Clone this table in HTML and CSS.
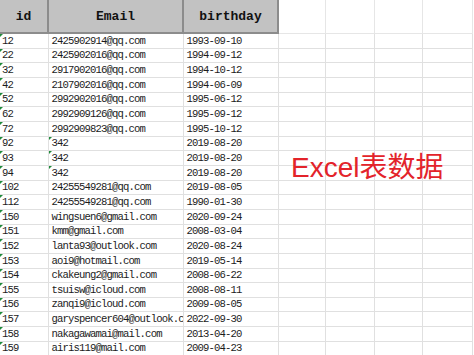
FILE: index.html
```html
<!DOCTYPE html>
<html lang="zh">
<head>
<meta charset="utf-8">
<link rel="stylesheet" href="styles.css">
</head>
<body>
<div class="sheet">
<table class="grid">
<colgroup>
<col class="c-id"><col class="c-email"><col class="c-bd"><col class="c-e1"><col class="c-e2"><col class="c-e3"><col class="c-e4">
</colgroup>
<thead>
<tr class="head"><th>id</th><th>Email</th><th>birthday</th><th class="blank"></th><th class="blank"></th><th class="blank"></th><th class="blank"></th></tr>
</thead>
<tbody>
<tr><td class="mark">12</td><td>2425902914@qq.com</td><td>1993-09-10</td><td></td><td></td><td></td><td></td></tr>
<tr><td class="mark">22</td><td>2425902016@qq.com</td><td>1994-09-12</td><td></td><td></td><td></td><td></td></tr>
<tr><td class="mark">32</td><td>2917902016@qq.com</td><td>1994-10-12</td><td></td><td></td><td></td><td></td></tr>
<tr><td class="mark">42</td><td>2107902016@qq.com</td><td>1994-06-09</td><td></td><td></td><td></td><td></td></tr>
<tr><td class="mark">52</td><td>2992902016@qq.com</td><td>1995-06-12</td><td></td><td></td><td></td><td></td></tr>
<tr><td class="mark">62</td><td>2992909126@qq.com</td><td>1995-09-12</td><td></td><td></td><td></td><td></td></tr>
<tr><td class="mark">72</td><td>2992909823@qq.com</td><td>1995-10-12</td><td></td><td></td><td></td><td></td></tr>
<tr><td class="mark">92</td><td class="mark">342</td><td>2019-08-20</td><td></td><td></td><td></td><td></td></tr>
<tr><td class="mark">93</td><td class="mark">342</td><td>2019-08-20</td><td></td><td></td><td></td><td></td></tr>
<tr><td class="mark">94</td><td class="mark">342</td><td>2019-08-20</td><td></td><td></td><td></td><td></td></tr>
<tr><td class="mark">102</td><td>24255549281@qq.com</td><td>2019-08-05</td><td></td><td></td><td></td><td></td></tr>
<tr><td class="mark">112</td><td>24255549281@qq.com</td><td>1990-01-30</td><td></td><td></td><td></td><td></td></tr>
<tr><td class="mark">150</td><td>wingsuen6@gmail.com</td><td>2020-09-24</td><td></td><td></td><td></td><td></td></tr>
<tr><td class="mark">151</td><td>kmm@gmail.com</td><td>2008-03-04</td><td></td><td></td><td></td><td></td></tr>
<tr><td class="mark">152</td><td>lanta93@outlook.com</td><td>2020-08-24</td><td></td><td></td><td></td><td></td></tr>
<tr><td class="mark">153</td><td>aoi9@hotmail.com</td><td>2019-05-14</td><td></td><td></td><td></td><td></td></tr>
<tr><td class="mark">154</td><td>ckakeung2@gmail.com</td><td>2008-06-22</td><td></td><td></td><td></td><td></td></tr>
<tr><td class="mark">155</td><td>tsuisw@icloud.com</td><td>2008-08-11</td><td></td><td></td><td></td><td></td></tr>
<tr><td class="mark">156</td><td>zanqi9@icloud.com</td><td>2009-08-05</td><td></td><td></td><td></td><td></td></tr>
<tr><td class="mark">157</td><td>garyspencer604@outlook.com</td><td>2022-09-30</td><td></td><td></td><td></td><td></td></tr>
<tr><td class="mark">158</td><td>nakagawamai@mail.com</td><td>2013-04-20</td><td></td><td></td><td></td><td></td></tr>
<tr><td class="mark">159</td><td>airis119@mail.com</td><td>2009-04-23</td><td></td><td></td><td></td><td></td></tr>
</tbody>
</table>
<div class="label">Excel表数据</div>
</div>
</body>
</html>
```
FILE: styles.css
```css
html, body {
  margin: 0;
  padding: 0;
  background: #ffffff;
  overflow: hidden;
}
.sheet {
  position: relative;
  width: 474px;
  height: 355px;
  overflow: hidden;
}
.grid {
  border-collapse: collapse;
  table-layout: fixed;
  width: 472px;
  font-family: "Liberation Mono", "Noto Sans CJK SC", monospace;
}
.c-id { width: 48px; }
.c-email { width: 135px; }
.c-bd { width: 95px; }
.c-e1 { width: 47px; }
.c-e2 { width: 49px; }
.c-e3 { width: 48px; }
.c-e4 { width: 50px; }
.head th {
  height: 32px;
  padding: 0;
  background: #c2c2c2;
  color: #111111;
  font-size: 13px;
  font-weight: bold;
  text-align: center;
  vertical-align: middle;
  border-right: 2px solid #8c8c8c;
  border-bottom: 2px solid #8c8c8c;
}
.head th.blank {
  background: #ffffff;
  border-right: 1px solid #e6e6e6;
  border-bottom: 1px solid #e6e6e6;
}
tbody td {
  height: 13.67px;
  padding: 0 0 0 3px;
  font-size: 10.6px;
  letter-spacing: -0.85px;
  color: #1c1c1c;
  white-space: nowrap;
  overflow: hidden;
  vertical-align: bottom;
  line-height: 13px;
  border-right: 1px solid #e0e0e0;
  border-bottom: 1px solid #e0e0e0;
  position: relative;
}
tbody td:first-child {
  padding-left: 2px;
}
td.mark::before {
  content: "";
  position: absolute;
  left: 0;
  top: 0;
  border-top: 3px solid #1e8a3a;
  border-right: 3px solid transparent;
}
.label {
  position: absolute;
  left: 291px;
  top: 148px;
  font-family: "Liberation Sans", "Noto Sans CJK SC", sans-serif;
  font-size: 28px;
  color: #e3232a;
  line-height: 40px;
  white-space: nowrap;
}
```
